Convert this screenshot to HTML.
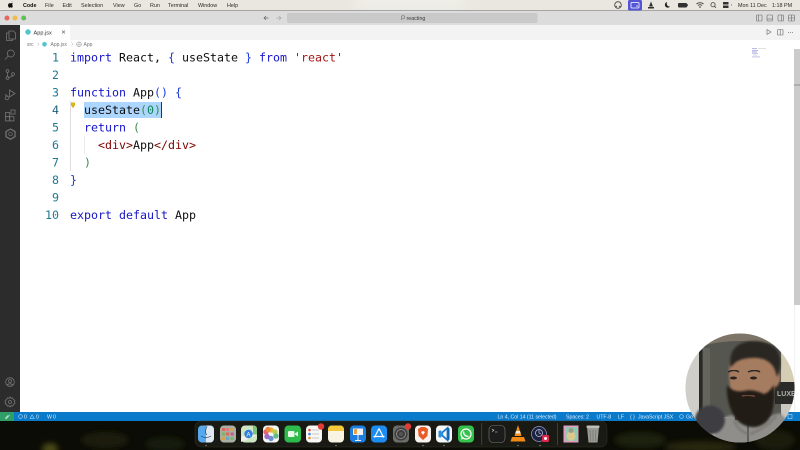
<!DOCTYPE html>
<html>
<head>
<meta charset="utf-8">
<style>
html,body{margin:0;padding:0;width:800px;height:450px;overflow:hidden;background:#fff}
svg{position:absolute;left:0;top:0;display:block}
.ui{font-family:"Liberation Sans",sans-serif}
.code{font-family:"DejaVu Sans Mono","Liberation Mono",monospace;font-size:11.63px}
.ln{font-family:"DejaVu Sans Mono","Liberation Mono",monospace;font-size:11.63px;fill:#237893;text-anchor:end}
.k{fill:#1414c8}.b{fill:#1a3ad8}.g{fill:#3c8c46}.s{fill:#a31515}.t{fill:#800000}.n{fill:#098658}.d{fill:#111}
</style>
</head>
<body>
<svg width="800" height="450" viewBox="0 0 800 450" xmlns="http://www.w3.org/2000/svg">
<defs>
<filter id="b1" x="-5%" y="-5%" width="110%" height="110%"><feGaussianBlur stdDeviation="0.3"/></filter>
<filter id="b2" x="-5%" y="-20%" width="110%" height="140%"><feGaussianBlur stdDeviation="0.3"/></filter>
<filter id="b3" x="-30%" y="-50%" width="160%" height="200%"><feGaussianBlur stdDeviation="3"/></filter>
<filter id="b4" x="-20%" y="-20%" width="140%" height="140%"><feGaussianBlur stdDeviation="1.100"/></filter>
<filter id="b5" x="-50%" y="-50%" width="200%" height="200%"><feGaussianBlur stdDeviation="6"/></filter>
<clipPath id="cam"><circle cx="740" cy="388" r="54.5"/></clipPath>
<clipPath id="wall"><rect x="0" y="421" width="800" height="29"/></clipPath>
</defs>

<!-- menu bar -->
<rect width="800" height="10.5" fill="#e9e7e0"/>
<rect x="355" y="-4" width="110" height="12" fill="#f1f0ea" filter="url(#b5)"/>
<!-- title bar -->
<rect y="10" width="800" height="1" fill="#a5a5a3"/>
<rect y="11" width="800" height="14" fill="#dcdcdc"/>
<!-- tab bar -->
<rect y="25" width="800" height="15" fill="#f3f3f3"/>
<rect x="20" y="25" width="50" height="15" fill="#fff"/>
<!-- editor -->
<rect y="40" width="800" height="372" fill="#fff"/>
<!-- activity bar -->
<rect x="0" y="25" width="20" height="387" fill="#2c2c2c"/>
<!-- status bar -->
<rect y="412" width="800" height="9.5" fill="#0a7acb"/>
<rect y="412" width="14" height="9.5" fill="#2f9f68"/>
<!-- wallpaper -->
<rect y="421" width="800" height="29" fill="#0b0c05"/>
<g clip-path="url(#wall)">
<ellipse cx="50" cy="449" rx="8" ry="6" fill="#4a4818" filter="url(#b3)"/>
<ellipse cx="105" cy="440" rx="24" ry="8" fill="#1a1e0a" filter="url(#b3)"/>
<ellipse cx="165" cy="444" rx="20" ry="7" fill="#181c09" filter="url(#b3)"/>
<ellipse cx="640" cy="440" rx="26" ry="8" fill="#1e210b" filter="url(#b3)"/>
<ellipse cx="700" cy="447" rx="36" ry="6" fill="#26270d" filter="url(#b3)"/>
<ellipse cx="775" cy="440" rx="20" ry="10" fill="#1c1f0a" filter="url(#b3)"/>
</g>

<!-- dock -->
<rect x="195" y="421" width="412" height="26" rx="6" fill="#1a1a14" stroke="#33332a" stroke-width=".5"/>
<g filter="url(#b2)">
<!-- finder -->
<rect x="198" y="425.500" width="16" height="17" rx="4" fill="#58a8ec"/>
<path d="M206 425.500h4a4 4 0 0 1 4 4v9a4 4 0 0 1-4 4h-4z" fill="#dfe8f0"/>
<path d="M207 426c-2 5-2 7 0 9M201 436c3 2 7 2 10 0" stroke="#26456a" stroke-width=".7" fill="none"/>
<!-- launchpad -->
<rect x="220" y="425.500" width="16" height="17" rx="4" fill="#a9b0a3"/>
<g fill="#d96a5a"><rect x="222" y="428" width="3.200" height="3"/><rect x="230.500" y="428" width="3.200" height="3" fill="#e1a14a"/><rect x="226" y="428" width="3.200" height="3" fill="#dc7b7b"/><rect x="222" y="432.500" width="3.200" height="3" fill="#7fb06b"/><rect x="226" y="432.500" width="3.200" height="3"/><rect x="230.500" y="432.500" width="3.200" height="3" fill="#c75b92"/><rect x="222" y="437" width="3.200" height="3" fill="#d8a24e"/><rect x="226" y="437" width="3.200" height="3" fill="#6aa8c4"/><rect x="230.500" y="437" width="3.200" height="3" fill="#84b069"/></g>
<!-- maps -->
<rect x="241" y="425.500" width="16" height="17" rx="4" fill="#cfe6c3"/>
<path d="M241 437l16-8v6l-16 7z" fill="#f0f0e6"/>
<path d="M253 425.500h1a3 3 0 0 1 3 3v6h-4z" fill="#7cc27d"/>
<circle cx="248.500" cy="434" r="4.200" fill="#2f7fe0"/>
<text x="248.500" y="436.500" font-size="6" fill="#fff" text-anchor="middle" class="ui">A</text>
<!-- photos -->
<rect x="263" y="425.500" width="16" height="17" rx="4" fill="#f6f6f4"/>
<circle cx="271" cy="430" r="2.700" fill="#f0b43c"/><circle cx="275" cy="432" r="2.700" fill="#b8cf50"/><circle cx="276" cy="436" r="2.700" fill="#66b98a"/><circle cx="271" cy="438.500" r="2.700" fill="#6a90d8"/><circle cx="267" cy="436.500" r="2.700" fill="#a06bc8"/><circle cx="266" cy="432" r="2.700" fill="#e2607a"/><circle cx="268" cy="429.500" r="2.700" fill="#ee8a3c"/>
<!-- facetime -->
<rect x="284.500" y="425.500" width="16.500" height="17" rx="4" fill="#2dbb4c"/>
<rect x="288" y="431" width="6.500" height="6" rx="1.300" fill="#eaf8ec"/><path d="M295 433.500l3-2v5l-3-2z" fill="#eaf8ec"/>
<!-- reminders -->
<rect x="306" y="425.500" width="16" height="17" rx="4" fill="#f7f7f5"/>
<circle cx="309.500" cy="430" r="1.300" fill="#e3543f"/><circle cx="309.500" cy="434" r="1.300" fill="#3f82e0"/><circle cx="309.500" cy="438" r="1.300" fill="#ed8f3a"/>
<g stroke="#bbb" stroke-width=".7"><path d="M312 430h7M312 434h7M312 438h7"/></g>
<circle cx="321" cy="426.500" r="3.200" fill="#e33a35"/>
<!-- notes -->
<rect x="328" y="425.500" width="16" height="17" rx="4" fill="#f8f4e4"/>
<path d="M328 431v-1.500a4 4 0 0 1 4-4h8a4 4 0 0 1 4 4v1.500z" fill="#f5c93a"/>
<!-- keynote -->
<rect x="350" y="425.500" width="16" height="17" rx="4" fill="#1c7fe0"/>
<rect x="353" y="428.500" width="10" height="6.500" fill="#f2f2ee"/><rect x="354" y="429" width="3" height="5" fill="#e7a24a"/>
<path d="M358 435v5M355 440.500h6" stroke="#eef" stroke-width="1"/>
<!-- app store -->
<rect x="371" y="425.500" width="16" height="17" rx="4" fill="#1d8cf0"/>
<path d="M379 428.500l-4.500 9M379 428.500l4.500 9M373.500 436.500h11" stroke="#fff" stroke-width="1.200" fill="none"/>
<!-- settings -->
<rect x="393" y="425.500" width="16" height="17" rx="4" fill="#6c6c6a"/>
<circle cx="401" cy="434" r="6.500" fill="#3c3c3c"/><circle cx="401" cy="434" r="4.500" fill="none" stroke="#8a8a8a" stroke-width="1"/><circle cx="401" cy="434" r="2" fill="#555"/>
<circle cx="408" cy="426.500" r="3.200" fill="#e33a35"/>
<!-- brave -->
<rect x="415" y="425.500" width="16" height="17" rx="4" fill="#f6f2ee"/>
<path d="M418 429l3-2h4l3 2-.6 7-4.400 4-4.400-4z" fill="#ea5a26"/>
<path d="M421 432l2 3 2-3-2-1z" fill="#fff"/>
<!-- vscode -->
<rect x="436" y="425.500" width="16" height="17" rx="4" fill="#f6f6f6"/>
<path d="M447.500 428l-7 6 7 6z" fill="none" stroke="#1b78cc" stroke-width="1.800"/>
<path d="M447.500 427.500l2 1v11l-2 1z" fill="#0f64b0"/>
<path d="M438.500 431l2-.8 3 3.800-3 3.800-2-.8z" fill="#2a8fdc"/>
<!-- whatsapp -->
<rect x="458" y="425.500" width="16" height="17" rx="4" fill="#34c24c"/>
<circle cx="466" cy="434" r="5" fill="none" stroke="#fff" stroke-width="1.200"/>
<path d="M463.500 431.500c0 3 2 5 5 5" stroke="#fff" stroke-width="1.400" fill="none"/>
<path d="M461 439.500l1-3 2 2z" fill="#fff"/>
<!-- divider -->
<rect x="481.500" y="423" width=".6" height="22" fill="#55554a"/>
<!-- terminal -->
<rect x="489" y="425.500" width="16" height="17" rx="4" fill="#1e1e1e" stroke="#777" stroke-width=".6"/>
<path d="M492 429l2 1.300-2 1.300M495 432h2.500" stroke="#ddd" stroke-width=".6" fill="none"/>
<!-- vlc -->
<path d="M518 425l3.500 11h-7z" fill="#f29018"/>
<path d="M516 431h4l.8 2.500h-5.600z" fill="#f4e9dc"/>
<path d="M512 437h12l1.500 4.500h-15z" fill="#ef8a12"/>
<!-- screen rec -->
<circle cx="539" cy="434" r="7.500" fill="#1d2142" stroke="#9aa0c0" stroke-width=".7"/>
<circle cx="539" cy="433" r="3.500" fill="none" stroke="#b9c0dc" stroke-width=".8"/>
<path d="M539 430v3l2 1" stroke="#dde" stroke-width=".6" fill="none"/>
<rect x="542" y="435" width="7" height="7" rx="1.500" fill="#e2264c"/><circle cx="545.500" cy="438.500" r="1.500" fill="#fff"/>
<!-- divider -->
<rect x="557" y="423" width=".6" height="22" fill="#55554a"/>
<!-- preview -->
<rect x="563.500" y="425.500" width="15" height="17" fill="#e69ac6"/>
<rect x="565" y="427" width="12" height="14" fill="#8fc9b0"/>
<ellipse cx="571" cy="436" rx="4.500" ry="5" fill="#d8c98e"/><circle cx="571" cy="430.500" r="2.500" fill="#9b9a86"/>
<!-- trash -->
<path d="M587 427h12l-1.500 15.500h-9z" fill="#9a9a94"/>
<rect x="586.500" y="425.500" width="13" height="2.500" rx="1" fill="#bfbfb8"/>
<path d="M590 430l.6 11M593 430v11M596 430l-.6 11" stroke="#707068" stroke-width=".6"/>
<!-- running dots -->
<g fill="#aaa"><circle cx="206" cy="445.500" r=".6"/><circle cx="336" cy="445.500" r=".6"/><circle cx="423" cy="445.500" r=".6"/><circle cx="444" cy="445.500" r=".6"/><circle cx="518" cy="445.500" r=".6"/><circle cx="540" cy="445.500" r=".6"/></g>
</g>

<!-- scrollbar -->
<rect x="794" y="49" width="6" height="256" fill="#cbcbcb"/>
<rect x="794" y="84.500" width="6" height="1" fill="#8f8f8f"/>
<rect x="794.500" y="305" width=".6" height="107" fill="#e4e4e4"/>
<!-- minimap -->
<g filter="url(#b1)">
<rect x="752" y="48" width="5" height="1" fill="#b9b9e4"/><rect x="758" y="48" width="8" height=".8" fill="#d8d8d8"/>
<rect x="752" y="50" width="6" height="1" fill="#b9b9e4"/><rect x="752" y="51.500" width="5" height="1" fill="#a9a9d8"/>
<rect x="752" y="53" width="6" height="1" fill="#c9c9ec"/><rect x="753" y="54.500" width="4" height="1" fill="#d0d0e8"/>
<rect x="752" y="56.500" width="8" height=".8" fill="#b0b0dc"/>
</g>

<!-- selection and code -->
<rect x="84" y="102" width="77" height="16" fill="#add6ff"/>
<rect x="161" y="102" width="1" height="16" fill="#333"/>
<rect x="70" y="101" width=".8" height="70" fill="#d6d6d6"/>
<rect x="84" y="136" width=".8" height="18" fill="#e6e6e6"/>
<path d="M71 102.500h4v3l-1 1v1h-2v-1l-1-1z" fill="#d9b21c"/>

<g filter="url(#b2)">
<text class="ln" x="59" y="61.500">1</text>
<text class="ln" x="59" y="79">2</text>
<text class="ln" x="59" y="96.500">3</text>
<text class="ln" x="59" y="114" style="fill:#1a5f78">4</text>
<text class="ln" x="59" y="131.500">5</text>
<text class="ln" x="59" y="149">6</text>
<text class="ln" x="59" y="166.500">7</text>
<text class="ln" x="59" y="184">8</text>
<text class="ln" x="59" y="201.500">9</text>
<text class="ln" x="59" y="219">10</text>

<text class="code" x="70" y="61.500" xml:space="preserve"><tspan class="k">import</tspan><tspan class="d"> React, </tspan><tspan class="b">{</tspan><tspan class="d"> useState </tspan><tspan class="b">}</tspan><tspan class="k"> from </tspan><tspan class="s">'react'</tspan></text>
<text class="code" x="70" y="96.500" xml:space="preserve"><tspan class="k">function</tspan><tspan class="d"> App</tspan><tspan class="b">()</tspan><tspan class="d"> </tspan><tspan class="b">{</tspan></text>
<text class="code" x="84" y="114" xml:space="preserve"><tspan class="d">useState</tspan><tspan class="g">(</tspan><tspan class="n">0</tspan><tspan class="g">)</tspan></text>
<text class="code" x="84" y="131.500" xml:space="preserve"><tspan class="k">return</tspan><tspan class="d"> </tspan><tspan class="g">(</tspan></text>
<text class="code" x="98" y="149" xml:space="preserve"><tspan class="t">&lt;div&gt;</tspan><tspan class="d">App</tspan><tspan class="t">&lt;/div&gt;</tspan></text>
<text class="code" x="84" y="166.500"><tspan class="g">)</tspan></text>
<text class="code" x="70" y="184"><tspan class="b">}</tspan></text>
<text class="code" x="70" y="219" xml:space="preserve"><tspan class="k">export default</tspan><tspan class="d"> App</tspan></text>
</g>

<!-- menu text -->
<g class="ui" font-size="5.400" fill="#2a2a2a" filter="url(#b2)">
<path d="M11.500 2.300c.6-.5 1.100-.5 1.100-.9-.6.1-1.100.5-1.100.9zM9.800 3.300c-1.300 0-1.900 1.200-1.700 2.400.1 1 .8 2 1.300 2 .4 0 .6-.3 1.100-.3s.6.3 1.100.3c.6 0 1.100-1 1.300-1.700-1-.5-1-1.800 0-2.300-.4-.5-.9-.6-1.300-.6-.5 0-.8.3-1.100.3s-.6-.1-.7-.1z" fill="#111"/>
<text x="23" y="7" font-weight="700" fill="#111">Code</text>
<text x="45" y="7">File</text>
<text x="62.500" y="7">Edit</text>
<text x="81" y="7">Selection</text>
<text x="113" y="7">View</text>
<text x="134" y="7">Go</text>
<text x="150" y="7">Run</text>
<text x="168" y="7">Terminal</text>
<text x="198" y="7">Window</text>
<text x="227" y="7">Help</text>
<text x="738" y="7">Mon 11 Dec</text>
<text x="772" y="7">1:18 PM</text>
</g>

<!-- menu extras -->
<g filter="url(#b2)">
<circle cx="618" cy="5" r="3.300" fill="none" stroke="#444" stroke-width=".9"/><path d="M615.500 7l1.500-1M620.500 7l-1.500-1" stroke="#444" stroke-width=".8"/>
<rect x="628" y="0" width="14" height="10.500" rx="1.500" fill="#5254d6"/>
<rect x="631" y="2.500" width="8" height="5.500" rx=".6" fill="none" stroke="#fff" stroke-width=".8"/><path d="M636 6h2" stroke="#fff" stroke-width=".8"/>
<path d="M651 1.500l2 5h-4zM648 7h6v1.500h-6z" fill="#333"/>
<path d="M667 2c-2.500.5-3 4.500-.2 5.500 1.200.4 2.500 0 3.300-1-2.300.4-4-1.800-3.100-4.500z" fill="#222"/>
<rect x="678" y="3" width="9" height="4.500" rx="1" fill="#333"/><rect x="687.200" y="4.200" width=".8" height="2" fill="#333"/>
<path d="M696.500 4c2-1.800 5-1.800 7 0M698 5.500c1.200-1 2.800-1 4 0" stroke="#333" stroke-width=".9" fill="none"/><circle cx="700" cy="7" r=".8" fill="#333"/>
<circle cx="713" cy="4.700" r="2.100" fill="none" stroke="#444" stroke-width=".8"/><path d="M714.500 6.300l1.500 1.500" stroke="#444" stroke-width=".8"/>
<rect x="723" y="2" width="5.500" height="2.500" fill="#333"/><rect x="723" y="5.500" width="5.500" height="2.500" fill="#333"/><circle cx="731.500" cy="5" r=".5" fill="#555"/>
</g>

<!-- traffic lights -->
<circle cx="7" cy="18" r="2.500" fill="#e5685c"/>
<circle cx="15" cy="18" r="2.500" fill="#eebb50"/>
<circle cx="23.700" cy="18" r="2.500" fill="#5fc056"/>

<!-- nav arrows + search -->
<path d="M268.500 18h-4.500M266 16l-2 2 2 2" stroke="#666" stroke-width=".7" fill="none"/>
<path d="M276.500 18h4.500M279 16l2 2-2 2" stroke="#a8a8a8" stroke-width=".7" fill="none"/>
<rect x="287" y="13" width="250.500" height="10" rx="2" fill="#c9c9c9"/>
<circle cx="403" cy="17.300" r="1.700" fill="none" stroke="#555" stroke-width=".5"/><path d="M402 18.700l-1 1.300" stroke="#555" stroke-width=".5"/>
<text class="ui" x="406.500" y="20" font-size="5.300" fill="#3a3a3a" filter="url(#b2)">reacting</text>

<!-- layout icons -->
<g fill="none" stroke="#666" stroke-width=".6">
<rect x="756.500" y="15" width="5.500" height="6" rx=".6"/><path d="M758.500 15v6"/>
<rect x="767" y="15" width="5.500" height="6" rx=".6"/><path d="M767 19h5.500"/>
<rect x="778" y="15" width="5.500" height="6" rx=".6"/><path d="M781.500 15v6"/>
<rect x="788.500" y="15" width="6" height="6" rx=".6"/><path d="M791.500 15v6M788.500 18h6"/>
<path d="M767 29.500v5l4-2.500z"/>
<rect x="777.500" y="29.500" width="5.500" height="5.500" rx=".5"/><path d="M780.200 29.500v5.500"/>
</g>
<g fill="#666"><circle cx="788.500" cy="32.500" r=".45"/><circle cx="790.500" cy="32.500" r=".45"/><circle cx="792.500" cy="32.500" r=".45"/></g>

<!-- tab -->
<circle cx="28" cy="32" r="2.700" fill="#4fc3d0"/>
<text class="ui" x="33.500" y="34.300" font-size="5.600" fill="#333" filter="url(#b2)">App.jsx</text>
<path d="M62 30.500l3 3M65 30.500l-3 3" stroke="#666" stroke-width=".6"/>

<!-- breadcrumb -->
<g class="ui" font-size="5" fill="#777" filter="url(#b2)">
<text x="27" y="46">src</text>
<path d="M37.500 42.700l1.500 1.500-1.500 1.500M71.500 42.700l1.500 1.500-1.500 1.500" stroke="#888" stroke-width=".4" fill="none"/>
<circle cx="44.500" cy="44.300" r="2.300" fill="#4fc3d0"/>
<text x="50.500" y="46">App.jsx</text>
<circle cx="79" cy="44.300" r="2.300" fill="none" stroke="#777" stroke-width=".5"/>
<path d="M79 42v4.600M76.700 44.300h4.600" stroke="#777" stroke-width=".3"/>
<text x="83.500" y="46">App</text>
</g>

<!-- activity icons -->
<g fill="none" stroke="#767676" stroke-width=".8" filter="url(#b2)">
<path d="M9 31h4.500l2 2v6h-6.500zM9 33h-2.500v7.500h6v-1.500"/>
<circle cx="10.800" cy="53.500" r="3.500"/><path d="M8.300 56l-3.300 3.500"/>
<circle cx="7.500" cy="71" r="1.400"/><circle cx="7.500" cy="78" r="1.400"/><circle cx="13" cy="74" r="1.400"/><path d="M7.500 72.500v4M13 75.500c0 1.500-3.500 1.500-5 2"/>
<path d="M9.500 90v7l5.500-3.500zM5 94.500l2.500 1.500"/><circle cx="7" cy="98" r="1.800"/>
<rect x="5.500" y="112.500" width="4.200" height="4.200"/><rect x="5.500" y="116.700" width="4.200" height="4.200"/><rect x="9.700" y="116.700" width="4.200" height="4.200"/><rect x="11" y="110" width="4" height="4"/>
<path d="M10.500 129l4.500 2.500v5.200l-4.500 2.600-4.500-2.600v-5.200z" stroke-width="1.200"/><circle cx="10.500" cy="134" r="1.800" stroke-width=".7"/>
<circle cx="10" cy="382" r="4.300"/><circle cx="10" cy="381" r="1.500"/><path d="M7.300 385c1-1.600 4.400-1.600 5.400 0"/>
<circle cx="10" cy="402" r="1.500"/><path d="M10 397l1 1.300 1.700-.3.700 1.600 1.500.8-.6 1.600.6 1.600-1.500.8-.7 1.600-1.700-.3-1 1.300-1-1.300-1.700.3-.7-1.600-1.500-.8.6-1.600-.6-1.600 1.500-.8.7-1.600 1.700.3z"/>
</g>

<!-- status bar -->
<path d="M5 418.500l3-3M6 419l3.500-4" stroke="#dff5e8" stroke-width=".6" fill="none"/>
<g class="ui" font-size="5.200" fill="#dcecf8" filter="url(#b2)">
<circle cx="20.500" cy="416.500" r="1.900" fill="none" stroke="#dcecf8" stroke-width=".5"/>
<text x="24" y="418.500">0</text>
<path d="M30 418.500l2.100-3.800 2.100 3.800z" fill="none" stroke="#dcecf8" stroke-width=".5"/>
<text x="36" y="418.500">0</text>
<text x="47" y="418.500">W</text>
<text x="53" y="418.500">0</text>
<text x="497.500" y="418.500">Ln 4, Col 14 (11 selected)</text>
<text x="566" y="418.500">Spaces: 2</text>
<text x="596.500" y="418.500">UTF-8</text>
<text x="618" y="418.500">LF</text>
<text x="630" y="418.500">{ }</text>
<text x="638" y="418.500">JavaScript JSX</text>
<circle cx="681.500" cy="416.500" r="1.900" fill="none" stroke="#dcecf8" stroke-width=".5"/>
<text x="686" y="418.500">Go Live</text>
<rect x="788" y="414.500" width="4" height="4" fill="none" stroke="#dcecf8" stroke-width=".5"/>
</g>

<!-- webcam -->
<g clip-path="url(#cam)">
<rect x="685" y="333" width="110" height="110" fill="#c9c7c0"/>
<!-- wall -->
<rect x="685" y="333" width="110" height="12" fill="#7d7568"/>
<path d="M700 347c20-8 60-8 81 0v70h-81z" fill="#565650"/>
<rect x="699" y="350" width="3.500" height="70" fill="#2a2a25"/>
<rect x="703" y="348" width="7" height="72" fill="#64645c"/>
<rect x="686" y="350" width="13" height="70" fill="#d0cec9"/>
<rect x="781" y="345" width="15" height="38" fill="#d6ceb4"/>
<rect x="775" y="382" width="22" height="22" fill="#2a2a28"/>
<text x="777" y="396" class="ui" font-size="7" font-weight="700" fill="#b0b0ab">LUXE</text>
<!-- hoodie -->
<path d="M712 445l6-24c8-6 18-8 26-4 14 6 26-2 36-4l14 14 4 18z" fill="#8f8e8a" filter="url(#b4)"/>
<path d="M748 424v20" stroke="#55544f" stroke-width="1.600"/>
<path d="M734 420c3 8 8 12 14 14M776 416c-6 8-15 14-26 18" stroke="#75746f" stroke-width="1.800" fill="none" filter="url(#b4)"/>
<!-- neck and head -->
<rect x="735" y="402" width="28" height="18" fill="#5a4030"/>
<path d="M729 372c-1-14 10-26 24-26 14 0 24 10 25 24 2 4 3 8 1 13-1 3-3 4-4 4-2 8-6 16-14 20-8 3-18 2-24-4-6-6-8-20-8-31z" fill="#a67c60" filter="url(#b4)"/>
<!-- hair -->
<path d="M730 369c-1-12 2-21 10-25 12-5 26-3 34 3 6 5 7 12 6 20-.5 4-1.500 7-3 10-1-5-3-11-7-14-4-4-12-6-20-5-7 .5-13 2-17 7-2 1-3 2-3 4z" fill="#2b2522" filter="url(#b4)"/>
<!-- beard -->
<path d="M727 385c-1 14 4 32 15 39 11 6 22 3 28-7 4-8 5-20 4-32-3 4-6 8-10 9-6-3-14-5-20-3-6 1-13 0-17-6z" fill="#231c19" filter="url(#b4)"/>
<path d="M742 396c4-1 9-1 13 .5" stroke="#74463a" stroke-width="1.500" fill="none" filter="url(#b2)"/>
<!-- eyes -->
<ellipse cx="733.500" cy="378" rx="3.500" ry="1.500" fill="#2d221e" filter="url(#b2)"/>
<ellipse cx="753.500" cy="378" rx="3.500" ry="1.500" fill="#2d221e" filter="url(#b2)"/>
<path d="M728 372c4-2 8-2 11 0M748 372c4-2 9-2 12 0" stroke="#2f2623" stroke-width="1.500" fill="none" filter="url(#b2)"/>
<!-- mic -->
<ellipse cx="710" cy="420" rx="15" ry="14.500" fill="#3e3e42" filter="url(#b4)"/>
</g>
</svg>
</body>
</html>
